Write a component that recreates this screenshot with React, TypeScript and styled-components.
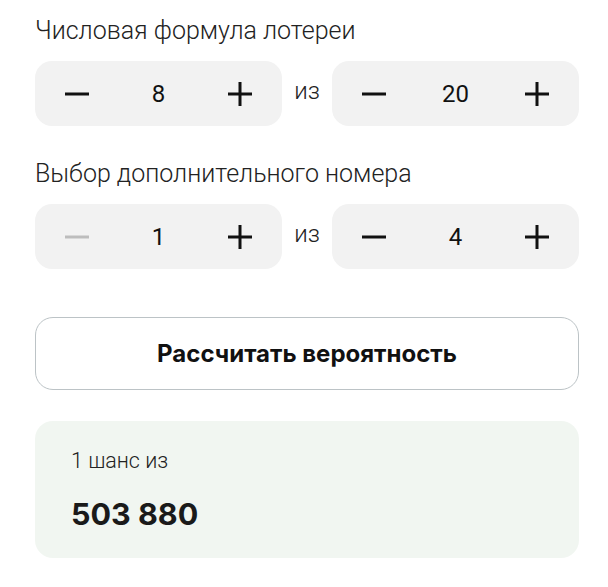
import React, { useState } from "react";
import styled, { createGlobalStyle } from "styled-components";

const Global = createGlobalStyle`
  html, body { margin: 0; padding: 0; background: #ffffff; }
  body { font-family: Roboto, "Noto Sans", sans-serif; color: #222; }
`;

const Page = styled.div`
  width: 544px;
  padding: 17px 29px 0 35px;
  display: flex;
  flex-direction: column;
`;

const Section = styled.section<{ $mb: number }>`
  display: flex;
  flex-direction: column;
  margin-bottom: ${(p) => p.$mb}px;
`;

const Label = styled.div`
  font-family: Roboto, sans-serif;
  font-weight: 300;
  font-size: 25px;
  line-height: 28px;
  color: #222;
  margin-bottom: 16px;
`;

const Row = styled.div`
  display: flex;
  align-items: center;
  justify-content: space-between;
`;

const Stepper = styled.div`
  width: 247px;
  height: 65px;
  background: #f2f2f2;
  border-radius: 17px;
  display: grid;
  grid-template-columns: 84px 1fr 84px;
  align-items: center;
`;

const StepBtn = styled.button<{ $disabled?: boolean }>`
  border: 0;
  background: transparent;
  padding: 0;
  height: 100%;
  display: flex;
  align-items: center;
  justify-content: center;
  cursor: pointer;
  color: ${(p) => (p.$disabled ? "#bdbdbd" : "#111")};
`;

const Value = styled.div`
  text-align: center;
  font-family: Roboto, sans-serif;
  font-size: 24px;
  font-weight: 400;
  color: #111;
`;

const Of = styled.span`
  font-family: Roboto, sans-serif;
  font-size: 24px;
  font-weight: 300;
  color: #222;
  margin-top: -6px;
`;

const CalcButton = styled.button`
  width: 544px;
  height: 73px;
  border: 1px solid #bcc3c6;
  border-radius: 18px;
  background: #fff;
  font-family: Inter, sans-serif;
  font-weight: 700;
  font-size: 24px;
  color: #111;
  cursor: pointer;
  margin-bottom: 31px;
`;

const Result = styled.div`
  width: 544px;
  height: 137px;
  box-sizing: border-box;
  background: #f1f6f1;
  border-radius: 18px;
  padding: 27px 36px;
  display: flex;
  flex-direction: column;
`;

const ResultCaption = styled.div`
  font-family: Roboto, sans-serif;
  font-weight: 300;
  font-size: 21.5px;
  color: #222;
  line-height: 26px;
`;

const ResultValue = styled.div`
  font-family: Inter, sans-serif;
  font-weight: 700;
  font-size: 30.5px;
  color: #1a1a1a;
  line-height: 36px;
  margin-top: 22px;
`;

const Minus = () => (
  <svg width="24" height="24" viewBox="0 0 24 24">
    <rect x="0" y="10.5" width="24" height="3" fill="currentColor" />
  </svg>
);

const Plus = () => (
  <svg width="24" height="24" viewBox="0 0 24 24">
    <rect x="0" y="10.5" width="24" height="3" fill="currentColor" />
    <rect x="10.5" y="0" width="3" height="24" fill="currentColor" />
  </svg>
);

const Counter: React.FC<{ value: number; min: number; onChange: (v: number) => void }> = ({
  value,
  min,
  onChange,
}) => (
  <Stepper>
    <StepBtn $disabled={value <= min} onClick={() => value > min && onChange(value - 1)}>
      <Minus />
    </StepBtn>
    <Value>{value}</Value>
    <StepBtn onClick={() => onChange(value + 1)}>
      <Plus />
    </StepBtn>
  </Stepper>
);

export default function App() {
  const [a, setA] = useState(8);
  const [b, setB] = useState(20);
  const [c, setC] = useState(1);
  const [d, setD] = useState(4);
  return (
    <>
      <Global />
      <Page>
        <Section $mb={34}>
          <Label>Числовая формула лотереи</Label>
          <Row>
            <Counter value={a} min={1} onChange={setA} />
            <Of>из</Of>
            <Counter value={b} min={1} onChange={setB} />
          </Row>
        </Section>
        <Section $mb={48}>
          <Label>Выбор дополнительного номера</Label>
          <Row>
            <Counter value={c} min={1} onChange={setC} />
            <Of>из</Of>
            <Counter value={d} min={1} onChange={setD} />
          </Row>
        </Section>
        <CalcButton>Рассчитать вероятность</CalcButton>
        <Result>
          <ResultCaption>1 шанс из</ResultCaption>
          <ResultValue>503 880</ResultValue>
        </Result>
      </Page>
    </>
  );
}
